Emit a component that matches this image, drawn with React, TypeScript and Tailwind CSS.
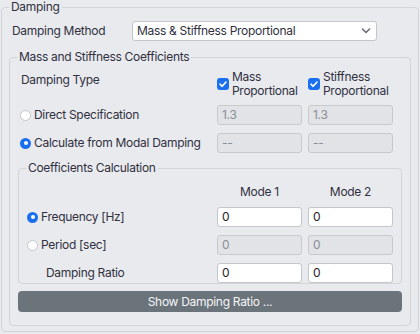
import React from "react";

const txt = "text-[#30303e]";

function Check() {
  return (
    <span className="w-[12px] h-[12px] rounded-[3px] bg-[#1a6ff0] flex items-center justify-center shrink-0">
      <svg width="10" height="10" viewBox="0 0 10 10">
        <path d="M2 5.2 L4.2 7.3 L8 3" fill="none" stroke="white" strokeWidth="1.6" strokeLinecap="round" strokeLinejoin="round" />
      </svg>
    </span>
  );
}

function Radio({ on }: { on?: boolean }) {
  return on ? (
    <span className="w-[11px] h-[11px] rounded-full bg-[#1a6ff0] flex items-center justify-center shrink-0">
      <span className="w-[4px] h-[4px] rounded-full bg-white" />
    </span>
  ) : (
    <span className="w-[11px] h-[11px] rounded-full bg-white border border-[#c3c6cb] shrink-0" />
  );
}

function Field({ value, disabled }: { value: string; disabled?: boolean }) {
  return (
    <div
      className={
        "w-[85px] h-[20px] rounded-[3px] border px-[4px] flex items-center text-[12px] " +
        (disabled
          ? "bg-[#e1e3e7] border-[#c7c9cd] text-[#8a8e95]"
          : "bg-white border-[#c4c6ca] text-[#1f2028]")
      }
    >
      {value}
    </div>
  );
}

export default function App() {
  return (
    <div
      className={"w-[420px] h-[334px] bg-[#e9eaee] px-[1px] text-[12px] leading-[14px] tracking-[-0.3px] " + txt}
      style={{ fontFamily: "Inter, 'Noto Sans', sans-serif" }}
    >
      <fieldset className="border border-[#d2d4d8] rounded-[4px] h-[332px]">
        <legend className="ml-[7px] px-[2px] leading-[14px]">Damping</legend>
        <div className="px-[7px]">
          <div className="flex items-center h-[20px] mt-[7px]">
            <div className="w-[123px] pl-[3px]">Damping Method</div>
            <div className="w-[245px] h-[20px] bg-white border border-[#c4c6ca] rounded-[3px] flex items-center justify-between pl-[4px] pr-[5px]">
              <span>Mass &amp; Stiffness Proportional</span>
              <svg width="10" height="8" viewBox="0 0 10 8">
                <path d="M1.5 2 L5 5.5 L8.5 2" fill="none" stroke="#6d7078" strokeWidth="1.6" strokeLinecap="round" strokeLinejoin="round" />
              </svg>
            </div>
          </div>

          <fieldset className="border border-[#d2d4d8] rounded-[4px] mt-[9px] h-[276px]">
            <legend className="ml-[7px] px-[2px] leading-[14px]">Mass and Stiffness Coefficients</legend>
            <div className="flex items-start mt-[6px]">
              <div className="w-[207px] pl-[11px] mt-[3px]">Damping Type</div>
              <div className="w-[85px] flex items-center gap-[3px]">
                <Check />
                <div className="leading-[14px]">Mass<br />Proportional</div>
              </div>
              <div className="w-[85px] ml-[6px] flex items-center gap-[3px]">
                <Check />
                <div className="leading-[14px]">Stiffness<br />Proportional</div>
              </div>
            </div>

            <div className="flex items-center mt-[7px] h-[20px]">
              <div className="w-[207px] pl-[10px] flex items-center gap-[3px]">
                <Radio />
                <span>Direct Specification</span>
              </div>
              <Field value="1.3" disabled />
              <div className="ml-[6px]"><Field value="1.3" disabled /></div>
            </div>
            <div className="flex items-center mt-[8px] h-[20px]">
              <div className="w-[207px] pl-[10px] flex items-center gap-[3px]">
                <Radio on />
                <span>Calculate from Modal Damping</span>
              </div>
              <Field value="--" disabled />
              <div className="ml-[6px]"><Field value="--" disabled /></div>
            </div>

            <div className="px-[8px]">
              <fieldset className="border border-[#d2d4d8] rounded-[4px] mt-[8px] h-[123px]">
                <legend className="ml-[7px] px-[2px] leading-[14px]">Coefficients Calculation</legend>
                <div className="flex items-center mt-[10px] h-[14px]">
                  <div className="w-[198px]" />
                  <div className="w-[85px] text-center">Mode 1</div>
                  <div className="w-[85px] ml-[6px] text-center">Mode 2</div>
                </div>
                <div className="flex items-center mt-[8px] h-[20px]">
                  <div className="w-[198px] pl-[8px] flex items-center gap-[3px]">
                    <Radio on />
                    <span>Frequency [Hz]</span>
                  </div>
                  <Field value="0" />
                  <div className="ml-[6px]"><Field value="0" /></div>
                </div>
                <div className="flex items-center mt-[8px] h-[20px]">
                  <div className="w-[198px] pl-[8px] flex items-center gap-[3px]">
                    <Radio />
                    <span>Period [sec]</span>
                  </div>
                  <Field value="0" disabled />
                  <div className="ml-[6px]"><Field value="0" disabled /></div>
                </div>
                <div className="flex items-center mt-[8px] h-[20px]">
                  <div className="w-[198px] pl-[27px]">Damping Ratio</div>
                  <Field value="0" />
                  <div className="ml-[6px]"><Field value="0" /></div>
                </div>
              </fieldset>
              <div className="mt-[7px] h-[21px] rounded-[4px] bg-[#6b737b] text-[#f4f5f7] flex items-center justify-center">
                Show Damping Ratio ...
              </div>
            </div>
          </fieldset>
        </div>
      </fieldset>
    </div>
  );
}
